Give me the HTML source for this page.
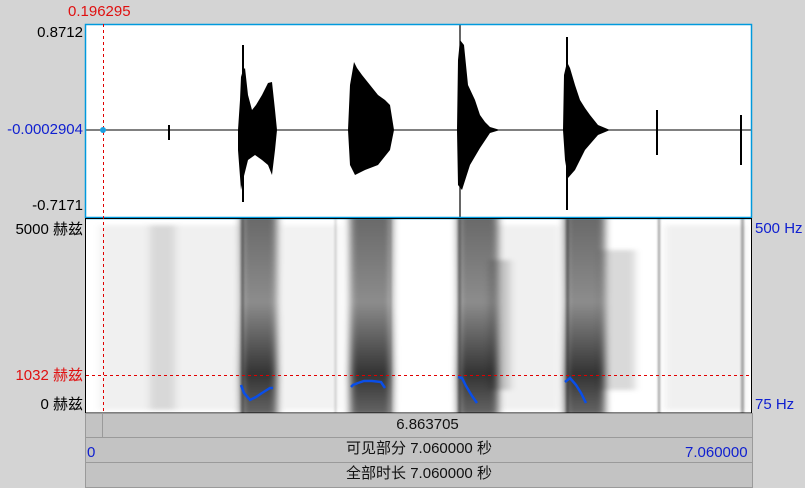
<!DOCTYPE html>
<html><head><meta charset="utf-8"><style>
body{margin:0;width:805px;height:485px;background:#d4d4d4;position:relative;overflow:hidden;font-family:"Liberation Sans","Noto Sans CJK SC",sans-serif;font-size:15px}
.t{position:absolute;line-height:16px;white-space:nowrap}
.r{text-align:right;width:80px;left:3px}
.bar{position:absolute;background:#c3c3c3;border:1px solid #9a9a9a;box-sizing:border-box;text-align:center;line-height:22px;color:#111}
</style></head><body>
<div class="t" style="left:68px;top:4px;color:#e01010">0.196295</div>
<div class="t r" style="top:25px">0.8712</div>
<div class="t r" style="top:122px;color:#1020d0;left:0;width:83px">-0.0002904</div>
<div class="t r" style="top:198px">-0.7171</div>
<div class="t r" style="top:222px">5000 赫兹</div>
<div class="t r" style="top:368px;color:#e01010">1032 赫兹</div>
<div class="t r" style="top:397px">0 赫兹</div>
<div class="t" style="left:755px;top:221px;color:#1020d0">500 Hz</div>
<div class="t" style="left:755px;top:397px;color:#1020d0">75 Hz</div>

<svg style="position:absolute;left:0;top:0" width="805" height="485">
<defs>
<linearGradient id="v" x1="0" y1="0" x2="0" y2="1">
<stop offset="0" stop-color="#000" stop-opacity=".6"/>
<stop offset=".45" stop-color="#000" stop-opacity=".45"/>
<stop offset=".8" stop-color="#000" stop-opacity=".8"/>
<stop offset="1" stop-color="#000" stop-opacity=".6"/>
</linearGradient>
<filter id="b" x="-20%" y="-5%" width="140%" height="110%"><feGaussianBlur stdDeviation="4 2"/></filter>
<filter id="b2"><feGaussianBlur stdDeviation="1 0"/></filter>
</defs>
<rect x="85" y="24" width="667" height="194" fill="#fff"/>
<rect x="86" y="219" width="666" height="194" fill="#fff"/>
<clipPath id="c"><rect x="86" y="219" width="666" height="194"/></clipPath>
<g clip-path="url(#c)">
<g filter="url(#b)">
<rect x="100" y="225" width="140" height="185" fill="#000" opacity=".06"/>
<rect x="150" y="225" width="25" height="185" fill="#000" opacity=".1"/>
<rect x="280" y="225" width="60" height="185" fill="#000" opacity=".05"/>
<rect x="495" y="225" width="65" height="185" fill="#000" opacity=".06"/>
<rect x="665" y="225" width="80" height="185" fill="#000" opacity=".06"/>
<rect x="241" y="210" width="36" height="205" fill="url(#v)"/>
<rect x="350" y="210" width="42" height="205" fill="url(#v)"/>
<rect x="458" y="210" width="40" height="205" fill="url(#v)"/>
<rect x="490" y="260" width="20" height="130" fill="#000" opacity=".18"/>
<rect x="565" y="210" width="40" height="205" fill="url(#v)"/>
<rect x="600" y="250" width="35" height="140" fill="#000" opacity=".15"/>
</g>
<g filter="url(#b2)" fill="#000">
<rect x="241" y="219" width="3" height="194" opacity=".4"/>
<rect x="458" y="219" width="3" height="194" opacity=".4"/>
<rect x="566" y="219" width="3" height="194" opacity=".4"/>
<rect x="658" y="219" width="2" height="194" opacity=".4"/>
<rect x="741" y="219" width="3" height="194" opacity=".35"/>
<rect x="390" y="219" width="1" height="194" opacity=".3"/>
<rect x="335" y="219" width="1" height="194" opacity=".3"/>
</g>
</g>
<line x1="86" y1="130" x2="752" y2="130" stroke="#000" stroke-width="1"/>
<g fill="#000">
<polygon points="238,130 240,100 241,77 243,70 245,68 248,95 252,110 256,105 262,95 268,83 272,82 275,110 277,130 275,150 272,175 268,165 262,160 255,155 248,160 243,180 241,190 238,150"/>
<polygon points="348,130 350,85 354,62 357,68 362,75 370,85 378,95 385,100 390,105 394,130 390,150 386,155 378,165 365,170 355,175 350,165"/>
<polygon points="457,130 458,60 460,40 464,45 468,85 475,100 480,115 485,122 490,127 500,130 490,133 480,148 470,165 462,190 458,185"/>
<polygon points="563,130 564,75 567,62 570,68 575,85 580,100 585,108 590,115 598,125 610,130 598,135 585,150 575,170 568,178 565,160"/>
<rect x="242" y="45" width="2" height="157"/>
<rect x="566" y="37" width="2" height="173"/>
<rect x="656" y="110" width="2" height="45"/>
<rect x="740" y="115" width="2" height="50"/>
<rect x="168" y="125" width="2" height="15"/>
</g>
<line x1="460" y1="24" x2="460" y2="218" stroke="#000" stroke-width="1.2"/>
<rect x="85.5" y="24.5" width="666" height="193" fill="none" stroke="#0099dd" stroke-width="1.5"/>
<line x1="85" y1="218.5" x2="752" y2="218.5" stroke="#0099dd" stroke-width="1.5"/>
<rect x="85.5" y="218.5" width="666" height="194.5" fill="none" stroke="#000" stroke-width="1"/>
<line x1="103.5" y1="24" x2="103.5" y2="413" stroke="#e00000" stroke-dasharray="3,3"/>
<line x1="86" y1="375.5" x2="752" y2="375.5" stroke="#e00000" stroke-dasharray="3,3"/>
<circle cx="103" cy="130" r="3" fill="#1aa0e0"/>
<g fill="none" stroke="#0a4ee8" stroke-width="2.5">
<polyline points="241,385 244,393 250,400 256,397 262,393 270,388 273,388"/>
<polyline points="351,387 353,385 358,383 364,381 372,381 381,382 385,388"/>
<polyline points="458,377 462,378 466,386 472,396 477,403"/>
<polyline points="565,382 570,378 576,385 581,393 586,403"/>
</g>
</svg>
<div class="bar" style="left:85px;top:413px;width:18px;height:25px"></div>
<div class="bar" style="left:102px;top:413px;width:651px;height:25px">6.863705</div>
<div class="bar" style="left:85px;top:437px;width:668px;height:26px">可见部分 7.060000 秒</div>
<div class="t" style="left:87px;top:445px;color:#1020d0">0</div>
<div class="t" style="left:685px;top:445px;color:#1020d0">7.060000</div>
<div class="bar" style="left:85px;top:462px;width:668px;height:26px">全部时长 7.060000 秒</div>
</body></html>
